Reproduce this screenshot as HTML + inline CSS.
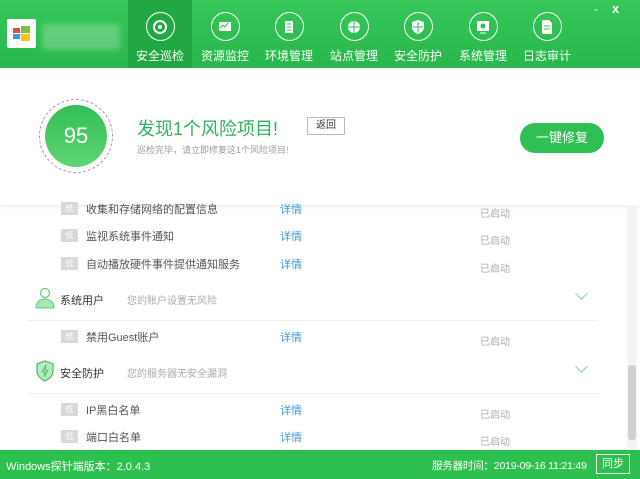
<!DOCTYPE html>
<html><head><meta charset="utf-8"><style>
*{margin:0;padding:0;box-sizing:border-box}
body{width:640px;height:479px;overflow:hidden;font-family:"Liberation Sans","Noto Sans CJK SC",sans-serif;background:#fff;position:relative;font-size:11px}
.hdr{position:absolute;left:0;top:0;width:640px;height:68px;background:linear-gradient(#36c65a,#27b74a)}
.logo{position:absolute;left:7px;top:19px;width:29px;height:29px;background:#fff;border-radius:2px}
.blur{position:absolute;left:42px;top:24px;width:78px;height:26px;background:rgba(255,255,255,.25);filter:blur(3px)}
.tab{position:absolute;top:0;width:64px;height:68px;text-align:center;color:#fff;font-size:12px}
.tab.act{background:#22a843}
.ic{width:29px;height:29px;border:1.5px solid #fff;border-radius:50%;margin:12px auto 0;display:flex;align-items:center;justify-content:center}
.tab span{display:block;margin-top:6px}
.top{position:absolute;left:0;top:68px;width:640px;height:137px;background:#fff;box-shadow:0 2px 4px rgba(0,0,0,.08)}
.ring{position:absolute;left:39px;top:99px;width:74px;height:74px;border:1px dashed #9a9a9a;border-radius:50%}
.score{position:absolute;left:45px;top:105px;width:62px;height:62px;border-radius:50%;background:linear-gradient(#33be55,#5fd574);color:#fff;font-size:22px;text-align:center;line-height:62px}
.t1{position:absolute;left:137px;top:115px;color:#2fb35a;font-size:18px}
.back{position:absolute;left:307px;top:117px;width:38px;height:18px;border:1px solid #bbb;font-size:10px;text-align:center;line-height:16px;color:#333}
.t2{position:absolute;left:137px;top:143px;color:#999;font-size:9px}
.fix{position:absolute;left:520px;top:123px;width:84px;height:30px;border-radius:15px;background:#2fbf52;color:#fff;font-size:13px;text-align:center;line-height:30px}
.row{position:absolute;left:61px;height:14px;width:540px}
.lo{position:absolute;left:0;top:0;width:17px;height:13px;background:#d8d8d8;color:#fff;font-size:8px;text-align:center;line-height:13px}
.nm{position:absolute;left:25px;top:-1px;color:#555;font-size:11px}
.dt{position:absolute;left:219px;top:-1px;color:#3a9be0;font-size:11px}
.st{position:absolute;left:419px;top:3px;color:#aaa;font-size:10px}
.grp{position:absolute;left:35px;width:560px;height:24px}
.gn{position:absolute;left:25px;top:5px;color:#333;font-size:11px}
.gd{position:absolute;left:92px;top:5px;color:#aaa;font-size:10px}
.chev{position:absolute;left:542px;top:2px;width:9px;height:9px;border-right:1.3px solid #8ccfa0;border-bottom:1.3px solid #8ccfa0;transform:rotate(45deg)}
.div{position:absolute;left:28px;width:570px;height:1px;background:#eee}
.ftr{position:absolute;left:0;top:450px;width:640px;height:29px;background:#2ec04f;color:#fff;font-size:11px}
.sb{position:absolute;left:627px;top:205px;width:10px;height:245px;background:#f4f4f4}
</style></head><body>
<div class="hdr">
<div class="logo"><svg width="29" height="29"><rect x="6" y="9" width="7" height="5" fill="#e8473b"/><rect x="14" y="7" width="9" height="7" fill="#7cc142"/><rect x="6" y="15" width="7" height="5" fill="#2f9de0"/><rect x="14" y="15" width="9" height="7" fill="#f8c21a"/></svg></div>
<div class="blur"></div>
<div class="tab act" style="left:128px"><div class="ic"><svg width="16" height="16"><circle cx="8" cy="8" r="6" fill="none" stroke="#fff" stroke-width="2"/><circle cx="8" cy="8" r="2" fill="#fff"/></svg></div><span>安全巡检</span></div>
<div class="tab" style="left:193px"><div class="ic"><svg width="16" height="16"><rect x="2" y="3" width="12" height="9" fill="#fff"/><path d="M3 9l3-3 2 2 3-4" stroke="#2cbf4e" fill="none"/></svg></div><span>资源监控</span></div>
<div class="tab" style="left:257px"><div class="ic"><svg width="16" height="16"><rect x="4" y="2" width="8" height="12" fill="#fff"/><path d="M6 5h4M6 8h4M6 11h4" stroke="#2cbf4e"/></svg></div><span>环境管理</span></div>
<div class="tab" style="left:322px"><div class="ic"><svg width="16" height="16"><circle cx="8" cy="8" r="6" fill="#fff"/><path d="M2 8h12M8 2v12" stroke="#2cbf4e"/></svg></div><span>站点管理</span></div>
<div class="tab" style="left:386px"><div class="ic"><svg width="16" height="16"><path d="M8 1l6 2v5c0 4-3 6-6 7-3-1-6-3-6-7V3z" fill="#fff"/><path d="M8 3v10M3 8h10" stroke="#2cbf4e"/></svg></div><span>安全防护</span></div>
<div class="tab" style="left:451px"><div class="ic"><svg width="16" height="16"><rect x="2" y="2" width="12" height="10" fill="#fff"/><circle cx="8" cy="7" r="2.5" fill="#2cbf4e"/><path d="M5 14h6" stroke="#fff"/></svg></div><span>系统管理</span></div>
<div class="tab" style="left:515px"><div class="ic"><svg width="16" height="16"><path d="M3 1h7l3 3v11H3z" fill="#fff"/><path d="M5 7h6M5 10h6" stroke="#2cbf4e"/></svg></div><span>日志审计</span></div>
<div style="position:absolute;left:594px;top:2px;color:#fff;font-size:12px">-</div>
<div style="position:absolute;left:612px;top:1px;color:#fff;font-size:13px;font-weight:bold">x</div>
</div>
<div class="top"></div>
<div class="ring"></div><div class="score">95</div>
<div class="t1">发现1个风险项目!</div>
<div class="back">返回</div>
<div class="t2">巡检完毕，请立即修复这1个风险项目!</div>
<div class="fix">一键修复</div>

<div class="row" style="top:202px"><div class="lo">低</div><div class="nm">收集和存储网络的配置信息</div><div class="dt">详情</div><div class="st">已启动</div></div>
<div class="row" style="top:229px"><div class="lo">低</div><div class="nm">监视系统事件通知</div><div class="dt">详情</div><div class="st">已启动</div></div>
<div class="row" style="top:257px"><div class="lo">低</div><div class="nm">自动播放硬件事件提供通知服务</div><div class="dt">详情</div><div class="st">已启动</div></div>
<div class="grp" style="top:287px"><svg style="position:absolute;left:0;top:0" width="20" height="22"><circle cx="10" cy="6" r="4.5" fill="none" stroke="#5fcf7a" stroke-width="1.3"/><path d="M1 21c0-6 4-9 9-9s9 3 9 9z" fill="#a8e6b8" stroke="#5fcf7a"/></svg><div class="gn">系统用户</div><div class="gd">您的账户设置无风险</div><div class="chev"></div></div>
<div class="div" style="top:320px"></div>
<div class="row" style="top:330px"><div class="lo">低</div><div class="nm">禁用Guest账户</div><div class="dt">详情</div><div class="st">已启动</div></div>
<div class="grp" style="top:360px"><svg style="position:absolute;left:0;top:0" width="20" height="22"><path d="M10 1l8 3v7c0 5-4 8-8 10-4-2-8-5-8-10V4z" fill="#b4ebc2" stroke="#4cc46a" stroke-width="1.3"/><path d="M11 5l-4 7h3l-1 5 4-7h-3z" fill="none" stroke="#4cc46a"/></svg><div class="gn">安全防护</div><div class="gd">您的服务器无安全漏洞</div><div class="chev"></div></div>
<div class="div" style="top:393px"></div>
<div class="row" style="top:403px"><div class="lo">低</div><div class="nm">IP黑白名单</div><div class="dt">详情</div><div class="st">已启动</div></div>
<div class="row" style="top:430px"><div class="lo">低</div><div class="nm">端口白名单</div><div class="dt">详情</div><div class="st">已启动</div></div>
<div class="sb"><div style="position:absolute;left:1px;top:160px;width:8px;height:75px;background:#d0d0d0;border-radius:3px"></div></div>
<div class="ftr"><span style="position:absolute;left:6px;top:8px">Windows探针端版本：2.0.4.3</span><span style="position:absolute;left:432px;top:8px;font-size:10.5px;letter-spacing:-0.2px">服务器时间：2019-09-16 11:21:49</span><div style="position:absolute;left:596px;top:4px;width:34px;height:20px;border:1px solid #fff;text-align:center;line-height:18px">同步</div></div>
</body></html>
